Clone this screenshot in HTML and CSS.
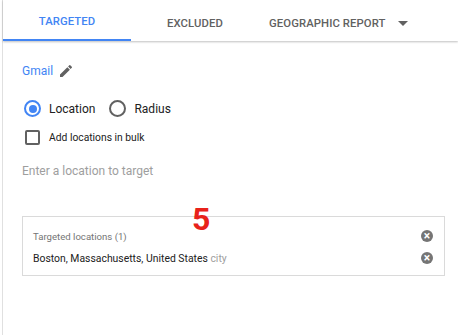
FILE: index.html
```html
<!DOCTYPE html>
<html>
<head>
	<meta http-equiv="Content-Type" content="text/html; charset=utf-8" />
	<title>Locations</title>
	<link rel="stylesheet" href="styles.css">
</head>
<body>
	<div class="panel">
		<!-- tabs -->
		<div class="tabs">
			<div class="tab active">TARGETED</div>
			<div class="tab">EXCLUDED</div>
			<div class="tab tab-menu">GEOGRAPHIC REPORT <span class="caret"></span></div>
		</div>

		<div class="content">
			<div class="campaign">
				<span class="campaign-name">Gmail</span>
				<svg class="pencil" width="16" height="16" viewBox="0 0 24 24"><path fill="#616161" d="M3 17.25V21h3.75L17.81 9.94l-3.75-3.75L3 17.25zM20.71 7.04a1 1 0 0 0 0-1.41l-2.34-2.34a1 1 0 0 0-1.41 0l-1.83 1.83 3.75 3.75 1.83-1.83z"/></svg>
			</div>

			<div class="radios">
				<label class="radio checked"><span class="dot"></span>Location</label>
				<label class="radio"><span class="dot"></span>Radius</label>
			</div>

			<label class="check"><span class="box"></span>Add locations in bulk</label>

			<div class="search">Enter a location to target</div>

			<div class="targeted">
				<span class="marker">5</span>
				<div class="row head">
					<span>Targeted locations (1)</span>
					<span class="remove">&times;</span>
				</div>
				<div class="row">
					<span>Boston, Massachusetts, United States <span class="type">city</span></span>
					<span class="remove">&times;</span>
				</div>
			</div>
		</div>
	</div>
</body>
</html>
```

FILE: styles.css
```css
body {
	margin: 0;
	font-family: Roboto, "Liberation Sans", Arial, sans-serif;
	background: #fff;
	color: #212121;
}

.panel {
	margin-left: 2px;
	border-left: 1px solid #e0e0e0;
	height: 335px;
}

.tabs {
	display: flex;
	height: 41px;
	box-shadow: 0 1px 2px rgba(0, 0, 0, 0.25);
}

.tab {
	width: 128px;
	display: flex;
	align-items: center;
	justify-content: center;
	font-size: 11.3px;
	font-weight: 500;
	color: #616161;
	letter-spacing: 0.1px;
	box-sizing: border-box;
	padding-top: 5px;
}

.tab.active {
	color: #4285f4;
	border-bottom: 2px solid #4285f4;
	padding-top: 3px;
}

.tab-menu {
	width: auto;
	justify-content: flex-start;
	padding-left: 10px;
}

.caret {
	margin-left: 12px;
	width: 0;
	height: 0;
	border-left: 5px solid transparent;
	border-right: 5px solid transparent;
	border-top: 5px solid #616161;
}

.content {
	position: relative;
	padding: 21px 0 0 19px;
	width: 423px;
}

.campaign {
	display: flex;
	align-items: center;
	height: 18px;
}

.campaign-name {
	font-size: 12px;
	color: #4285f4;
}

.pencil {
	margin-left: 5px;
}

.radios {
	display: flex;
	gap: 14px;
	margin-top: 20px;
	margin-left: 2px;
}

.radio {
	display: flex;
	align-items: center;
	font-size: 12px;
	color: #212121;
}

.dot {
	width: 13px;
	height: 13px;
	border: 2px solid #616161;
	border-radius: 50%;
	margin-right: 8px;
	position: relative;
}

.radio.checked .dot {
	border-color: #4285f4;
}

.radio.checked .dot::after {
	content: "";
	position: absolute;
	left: 2.5px;
	top: 2.5px;
	width: 8px;
	height: 8px;
	border-radius: 50%;
	background: #4285f4;
}

.check {
	display: flex;
	align-items: center;
	margin-top: 13px;
	margin-left: 3px;
	font-size: 10.3px;
	color: #212121;
}

.box {
	width: 11px;
	height: 11px;
	border: 2px solid #616161;
	border-radius: 2px;
	margin-right: 9px;
}

.search {
	margin-top: 19px;
	font-size: 12px;
	color: #9e9e9e;
}

.targeted {
	position: relative;
	margin-top: 38px;
	border: 1px solid #dadada;
	padding: 10px 11px 8px 10px;
}

.marker {
	position: absolute;
	left: 169px;
	top: -14px;
	font-size: 32px;
	font-weight: 700;
	color: #e8221b;
	line-height: 1;
}

.row {
	display: flex;
	justify-content: space-between;
	align-items: center;
	font-size: 10.4px;
	color: #212121;
	height: 18px;
}

.row + .row {
	margin-top: 4px;
}

.row.head {
	font-size: 9.6px;
	color: #757575;
}

.type {
	color: #9e9e9e;
}

.remove {
	width: 12px;
	height: 12px;
	border-radius: 50%;
	background: #757575;
	color: #fff;
	font-size: 12px;
	font-weight: 700;
	line-height: 12px;
	text-align: center;
}
```
